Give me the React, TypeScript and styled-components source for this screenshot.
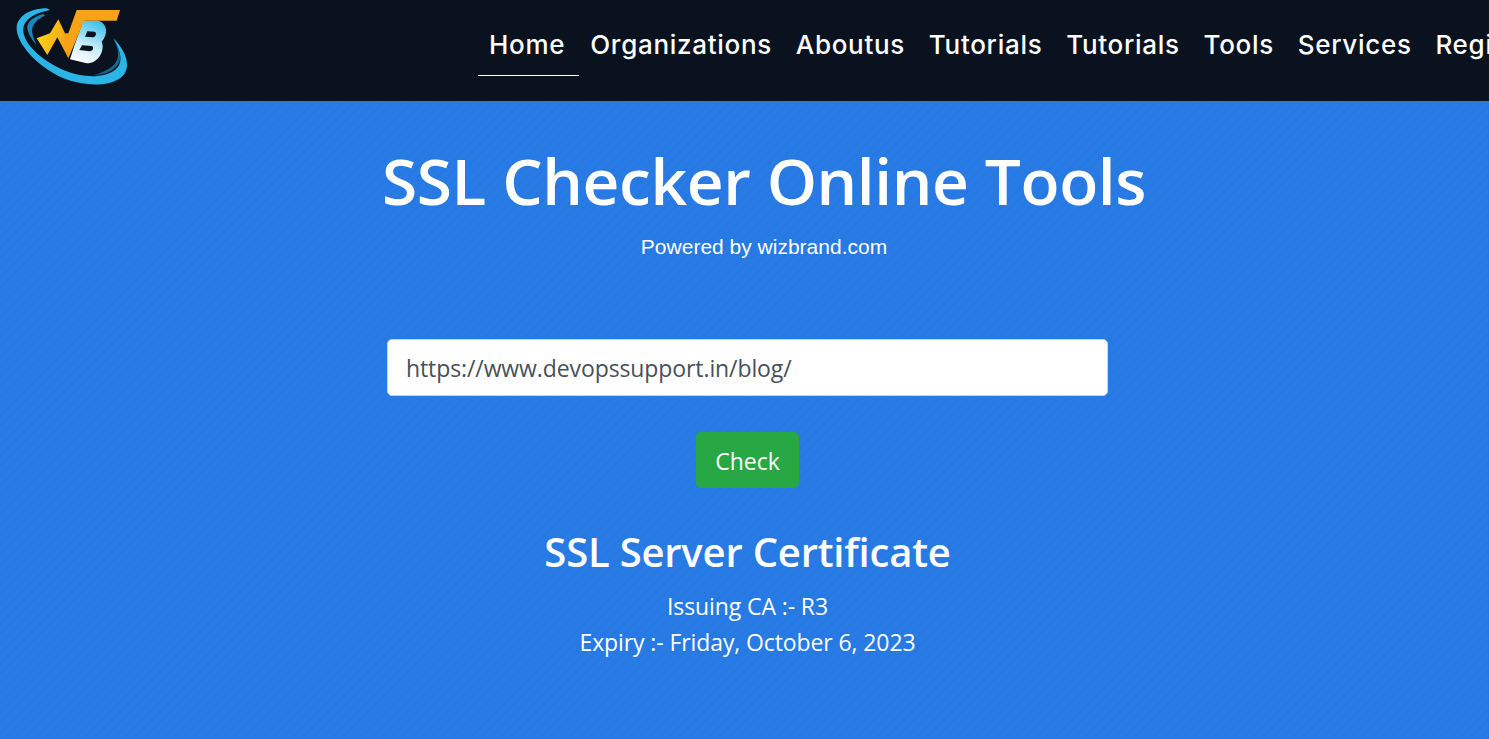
import React from "react";
import styled, { createGlobalStyle } from "styled-components";

const GlobalStyle = createGlobalStyle`
	html, body {
		margin: 0;
		padding: 0;
		overflow: hidden;
	}
	* {
		box-sizing: border-box;
	}
`;

const navItems = ["Home", "Organizations", "Aboutus", "Tutorials", "Tutorials", "Tools", "Services", "Register"];

const Logo = () => (
	<svg width="160" height="101" viewBox="0 0 480 303">
		<defs>
			<linearGradient id="bolt" x1="0" y1="0" x2="1" y2="0.4">
				<stop offset="0" stopColor="#fde01c" />
				<stop offset="1" stopColor="#f6a313" />
			</linearGradient>
			<linearGradient id="bee" x1="0.7" y1="0" x2="0.3" y2="1">
				<stop offset="0" stopColor="#3fc0ea" />
				<stop offset="0.6" stopColor="#cdeefa" />
				<stop offset="1" stopColor="#ffffff" />
			</linearGradient>
			<filter id="soft">
				<feGaussianBlur stdDeviation="1.6" />
			</filter>
		</defs>
		<g filter="url(#soft)">
			<path d="M140 25C90 25 50 50 50 85C50 130 110 200 190 235C250 258 320 262 360 235C395 210 385 160 340 115C365 160 370 190 345 210C310 235 250 235 190 210C120 180 65 125 70 85C72 60 100 40 150 30Z" fill="#2cb5e6" />
			<path d="M130 42C100 50 80 65 82 85C84 100 95 120 110 135C100 115 95 100 97 85C100 70 115 55 135 47Z" fill="#1a86b8" />
			<path d="M340 118C358 150 362 180 335 200C320 212 300 220 280 225C320 225 352 208 360 180C364 160 352 135 340 118Z" fill="#13688f" />
			<path d="M250 62L295 62C322 70 326 102 305 125C316 150 296 190 260 190L210 178L222 140Z" fill="url(#bee)" />
			<path d="M262 94L284 95C291 98 288 110 279 112L255 110ZM246 136L276 138C283 143 279 153 269 154L238 150Z" fill="#0a121f" />
			<path d="M110 115L150 100L175 58L195 100L205 175L172 112L142 165Z" fill="url(#bolt)" />
			<path d="M230 30L360 30L350 62L252 62L222 135L205 175L190 100L205 100Z" fill="#f6a313" />
		</g>
	</svg>
);

const App = () => {
	return (
		<>
			<GlobalStyle />
			<Page>
				<Header>
					<LogoBox>
						<Logo />
					</LogoBox>
					<Nav>
						{navItems.map((item, i) => (
							<NavLink key={i} $active={i === 0}>
								{item}
							</NavLink>
						))}
					</Nav>
				</Header>
				<Main>
					<TitleBlock>
						<Title>SSL Checker Online Tools</Title>
						<Powered>Powered by wizbrand.com</Powered>
					</TitleBlock>
					<UrlInput defaultValue="https://www.devopssupport.in/blog/" />
					<CheckButton>Check</CheckButton>
					<SubTitle>SSL Server Certificate</SubTitle>
					<FirstInfo>Issuing CA :- R3</FirstInfo>
					<Info>Expiry :- Friday, October 6, 2023</Info>
				</Main>
			</Page>
		</>
	);
};

const Page = styled.div`
	width: 1489px;
	height: 739px;
	overflow: hidden;
	display: flex;
	flex-direction: column;
	font-family: "Open Sans", "Noto Sans", sans-serif;
`;

const Header = styled.header`
	height: 101px;
	flex: none;
	background: #0a121f;
	display: flex;
	overflow: hidden;
`;

const LogoBox = styled.div`
	width: 478px;
	flex: none;
	line-height: 0;
`;

const Nav = styled.nav`
	display: flex;
	white-space: nowrap;
`;

const NavLink = styled.a<{ $active?: boolean }>`
	height: 76px;
	padding: 28px ${(p) => (p.$active ? "13.5px 0 11px" : "12.3px 0 11.5px")};
	font-family: "Inter", "Open Sans", sans-serif;
	font-size: 26px;
	line-height: 34px;
	font-weight: 500;
	letter-spacing: 0.7px;
	color: #fff;
	border-bottom: 1px solid ${(p) => (p.$active ? "#fff" : "transparent")};
`;

const Main = styled.main`
	flex: 1;
	background-color: #287ae4;
	background-image: repeating-linear-gradient(
		135deg,
		transparent 0 5px,
		rgba(0, 0, 0, 0.02) 5px 7px
	);
	display: flex;
	flex-direction: column;
	align-items: center;
	color: #fff;
	padding-left: 6px;
`;

const TitleBlock = styled.div`
	display: flex;
	flex-direction: column;
	align-items: center;
	margin-left: 33px;
`;

const Title = styled.h1`
	margin: 41px 0 0;
	font-size: 64px;
	line-height: 77px;
	font-weight: 600;
	letter-spacing: -0.4px;
`;

const Powered = styled.div`
	margin-top: 16px;
	font-family: "Liberation Sans", Arial, sans-serif;
	font-size: 21px;
	line-height: 24px;
`;

const UrlInput = styled.input`
	margin-top: 80px;
	width: 721px;
	height: 57px;
	padding: 1px 18px 0;
	border: 1px solid #ced4da;
	border-radius: 5px;
	background: #fff;
	color: #495057;
	font-family: "Open Sans", sans-serif;
	font-size: 23px;
	letter-spacing: -0.1px;
	outline: none;
`;

const CheckButton = styled.button`
	margin-top: 36px;
	width: 103px;
	height: 56px;
	padding: 2px 0 0;
	border: none;
	border-radius: 5px;
	background: #28a745;
	color: #fff;
	font-family: "Open Sans", sans-serif;
	font-size: 23px;
`;

const SubTitle = styled.h2`
	margin: 37px 0 0;
	font-size: 40px;
	line-height: 54px;
	font-weight: 600;
	letter-spacing: -0.2px;
`;

const Info = styled.div`
	margin-top: 3px;
	font-size: 23px;
	line-height: 33px;
	letter-spacing: -0.1px;
`;

const FirstInfo = styled(Info)`
	margin-top: 11px;
`;

export default App;
